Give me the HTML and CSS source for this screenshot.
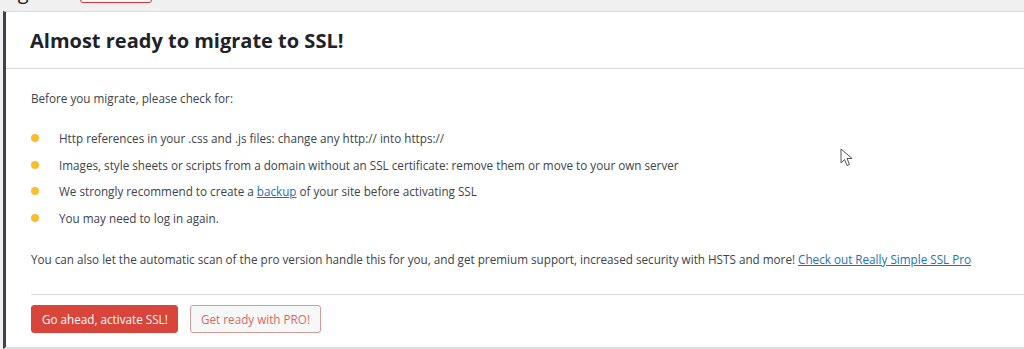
FILE: index.html
```html
<!DOCTYPE html>
<html>
<head>
    <title>Really Simple SSL</title>
    <link rel="stylesheet" href="styles.css">
</head>
<body>
    <div class="topbar">
        <span class="page-title">Settings</span>
        <span class="top-button"></span>
    </div>

    <div class="notice">
        <div class="notice-header">
            <h1>Almost ready to migrate to SSL!</h1>
        </div>
        <div class="notice-content">
            <p>Before you migrate, please check for:</p>
            <ul class="checklist">
                <li>Http references in your .css and .js files: change any http:// into https://</li>
                <li>Images, style sheets or scripts from a domain without an SSL certificate: remove them or move to your own server</li>
                <li>We strongly recommend to create a <a href="#">backup</a> of your site before activating SSL</li>
                <li>You may need to log in again.</li>
            </ul>
            <p>You can also let the automatic scan of the pro version handle this for you, and get premium support, increased security with HSTS and more! <a href="#">Check out Really Simple SSL Pro</a></p>
        </div>
        <div class="notice-footer">
            <button class="btn btn-primary">Go ahead, activate SSL!</button>
            <button class="btn btn-secondary">Get ready with PRO!</button>
        </div>
    </div>

    <svg class="cursor" width="14" height="20" viewBox="0 0 14 20">
        <path d="M1 1 L1 15 L4.5 11.5 L7 17.5 L9.5 16.5 L7 10.5 L12 10.5 Z" fill="#fff" stroke="#555" stroke-width="1"/>
    </svg>
</body>
</html>
```

FILE: styles.css
```css
body {
    margin: 0;
    background: #f0f0f1;
    font-family: "Open Sans", "Noto Sans", sans-serif;
    color: #3c434a;
    font-size: 11.7px;
}
.topbar {
    height: 11px;
    overflow: hidden;
    display: flex;
    align-items: flex-end;
    gap: 42px;
}
.page-title {
    font-size: 20px;
    line-height: 20px;
    margin-bottom: 9px;
    margin-left: -36px;
    color: #1d2327;
}
.top-button {
    border: 1px solid #d63638;
    border-radius: 3px;
    background: #f6f7f7;
    width: 70px;
    height: 24px;
    margin-bottom: 8px;
}
.notice {
    margin-left: 3px;
    background: #fff;
    border-top: 1px solid #dcdcde;
    border-left: 3px solid #3c434a;
    border-bottom: 2px solid #dcdcde;
}
.notice-header {
    height: 56px;
    display: flex;
    align-items: center;
    padding-left: 24px;
    border-bottom: 1px solid #dcdcde;
}
.notice-header h1 {
    margin: 0;
    font-size: 20px;
    font-weight: 700;
    color: #1d2327;
}
.notice-content {
    padding: 19px 24px 0 25px;
}
.notice-content p {
    margin: 0;
    line-height: 20px;
}
.checklist {
    list-style: none;
    margin: 17px 0 18px;
    padding: 0;
}
.checklist li {
    position: relative;
    padding-left: 28px;
    line-height: 26.5px;
}
.checklist li::before {
    content: "";
    position: absolute;
    left: 0;
    top: 9px;
    width: 8px;
    height: 8px;
    border-radius: 50%;
    background: #f8be2e;
}
a {
    color: #2271b1;
}
.notice-footer {
    margin: 25px 0 0 25px;
    border-top: 1px solid #dcdcde;
    padding: 10px 0 14px;
    display: flex;
    gap: 12px;
}
.btn {
    font-family: "Open Sans", "Noto Sans", sans-serif;
    font-size: 11.7px;
    height: 28px;
    padding: 0 10px;
    border-radius: 3px;
    white-space: nowrap;
    cursor: pointer;
}
.btn-primary {
    background: #d9443b;
    border: 1px solid #d9443b;
    color: #fff;
    width: 147px;
}
.btn-secondary {
    background: #f6f7f7;
    border: 1px solid #d49a98;
    color: #d66a62;
    width: 131px;
}
.cursor {
    position: absolute;
    left: 840px;
    top: 148px;
}
```
